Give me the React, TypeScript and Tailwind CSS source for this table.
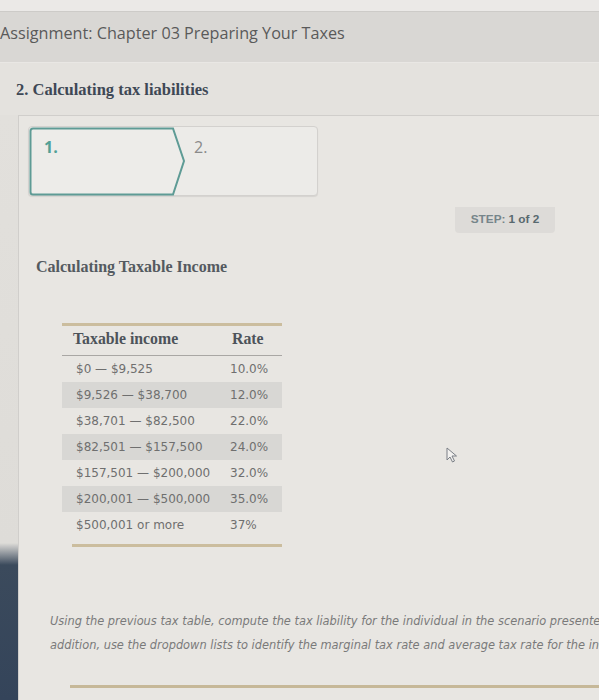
import React from "react";

const rows: [string, string][] = [
  ["$0 — $9,525", "10.0%"],
  ["$9,526 — $38,700", "12.0%"],
  ["$38,701 — $82,500", "22.0%"],
  ["$82,501 — $157,500", "24.0%"],
  ["$157,501 — $200,000", "32.0%"],
  ["$200,001 — $500,000", "35.0%"],
  ["$500,001 or more", "37%"],
];

const serif = { fontFamily: '"Liberation Serif", "DejaVu Serif", serif' };
const verdana = { fontFamily: '"DejaVu Sans", "Liberation Sans", sans-serif' };

export default function App() {
  return (
    <div className="relative w-[599px] h-[700px] overflow-hidden bg-[#e4e2de]">
      <div className="h-[12px] bg-[#ebe9e7] border-b border-[#cdcbc8]" />
      <div
        className="h-[50px] bg-[#d9d7d4] flex items-center pb-[8px] text-[16.2px] text-[#5a5a5a] whitespace-nowrap"
        style={{ fontFamily: '"Open Sans", sans-serif' }}
      >
        Assignment: Chapter 03 Preparing Your Taxes
      </div>
      <div
        className="h-[53px] flex items-center pl-[16px] pt-[2px] text-[16.5px] font-bold text-[#3e4855] border-t border-[#e9e7e4]"
        style={serif}
      >
        2. Calculating tax liabilities
      </div>
      <div className="flex">
        <div className="w-[18px] shrink-0 h-[585px] bg-[linear-gradient(to_bottom,#e2e0dc_0px,#dedcd8_428px,#3b4a5c_450px,#34445a_585px)]" />
        <div className="flex-1 min-w-0 border-l border-t border-[#d0cecb] bg-[#e8e6e2] pl-[9px] pt-[10px]">
          {/* Tabs */}
          <div className="flex w-[290px] h-[70px] rounded-[4px] border border-[#d3d1ce] bg-[#ecebe8] shadow-[0_1px_1px_rgba(0,0,0,0.08)]">
            <div className="relative w-[158px] h-full shrink-0">
              <svg className="absolute inset-0" width="158" height="70" viewBox="0 0 158 70">
                <path
                  d="M4,1.5 H144 L155,34 L144,67.5 H4 Q1.5,67.5 1.5,65 V4 Q1.5,1.5 4,1.5 Z"
                  fill="#edece9"
                  stroke="#5e9b95"
                  strokeWidth="2"
                />
              </svg>
              <span
                className="absolute left-[15px] top-[8px] text-[16px] font-bold text-[#52a096]"
                style={{ fontFamily: '"Open Sans", sans-serif' }}
              >
                1.
              </span>
            </div>
            <div
              className="pl-[7px] pt-[8px] text-[16px] text-[#8a8a8a]"
              style={{ fontFamily: '"Open Sans", sans-serif' }}
            >
              2.
            </div>
          </div>

          {/* Step */}
          <div className="flex justify-end pr-[44px] mt-[11px]">
            <div
              className="w-[100px] h-[26px] rounded-b-[4px] bg-[#dddbd8] flex items-center justify-center text-[11.8px] font-bold text-[#76858a]"
              style={{ fontFamily: '"Liberation Sans", Arial, sans-serif' }}
            >
              STEP: <span className="ml-[3px] text-[#58696f]">1 of 2</span>
            </div>
          </div>

          {/* Heading */}
          <div className="mt-[25px] pl-[8px] h-[18px] leading-[18px] text-[16px] font-bold text-[#545a60]" style={serif}>
            Calculating Taxable Income
          </div>

          {/* Table */}
          <div className="mt-[47px] ml-[34px] w-[220px]">
            <div className="h-[3px] bg-[#cbbd9e]" />
            <div className="flex h-[30px] items-end pb-[4px] border-b border-[#a9a7a4] font-bold text-[15.8px] text-[#4d535a]" style={serif}>
              <div className="w-[160px] pl-[11px]">Taxable income</div>
              <div className="flex-1 pl-[10px]">Rate</div>
            </div>
            {rows.map(([inc, rate], i) => (
              <div
                key={i}
                className={`flex h-[26px] items-center text-[12px] text-[#6f6f6f] ${i % 2 === 1 ? "bg-[#d8d7d4]" : ""}`}
                style={verdana}
              >
                <div className="w-[163px] pl-[14px] whitespace-nowrap">{inc}</div>
                <div className="flex-1 pl-[5px]">{rate}</div>
              </div>
            ))}
            <div className="mt-[6px] ml-[10px] h-[3px] bg-[#cbbd9e]" />
          </div>

          {/* Paragraph */}
          <div
            className="mt-[62px] pl-[22px] italic text-[11.4px] leading-[24px] text-[#7a7a7a] whitespace-nowrap overflow-hidden"
            style={verdana}
          >
            <div>Using the previous tax table, compute the tax liability for the individual in the scenario presented. In</div>
            <div>addition, use the dropdown lists to identify the marginal tax rate and average tax rate for the individual.</div>
          </div>

          <div className="mt-[28px] ml-[42px] h-[3px] bg-[#c6b898]" />
        </div>
      </div>

      {/* mouse cursor */}
      <svg className="absolute left-[446px] top-[447px]" width="12" height="16" viewBox="0 0 12 16">
        <path d="M1,1 L1,13 L4,10 L6.5,15 L8.5,14 L6,9 L10.5,9 Z" fill="#f2f1ef" stroke="#7a7f86" strokeWidth="1" />
      </svg>
    </div>
  );
}
